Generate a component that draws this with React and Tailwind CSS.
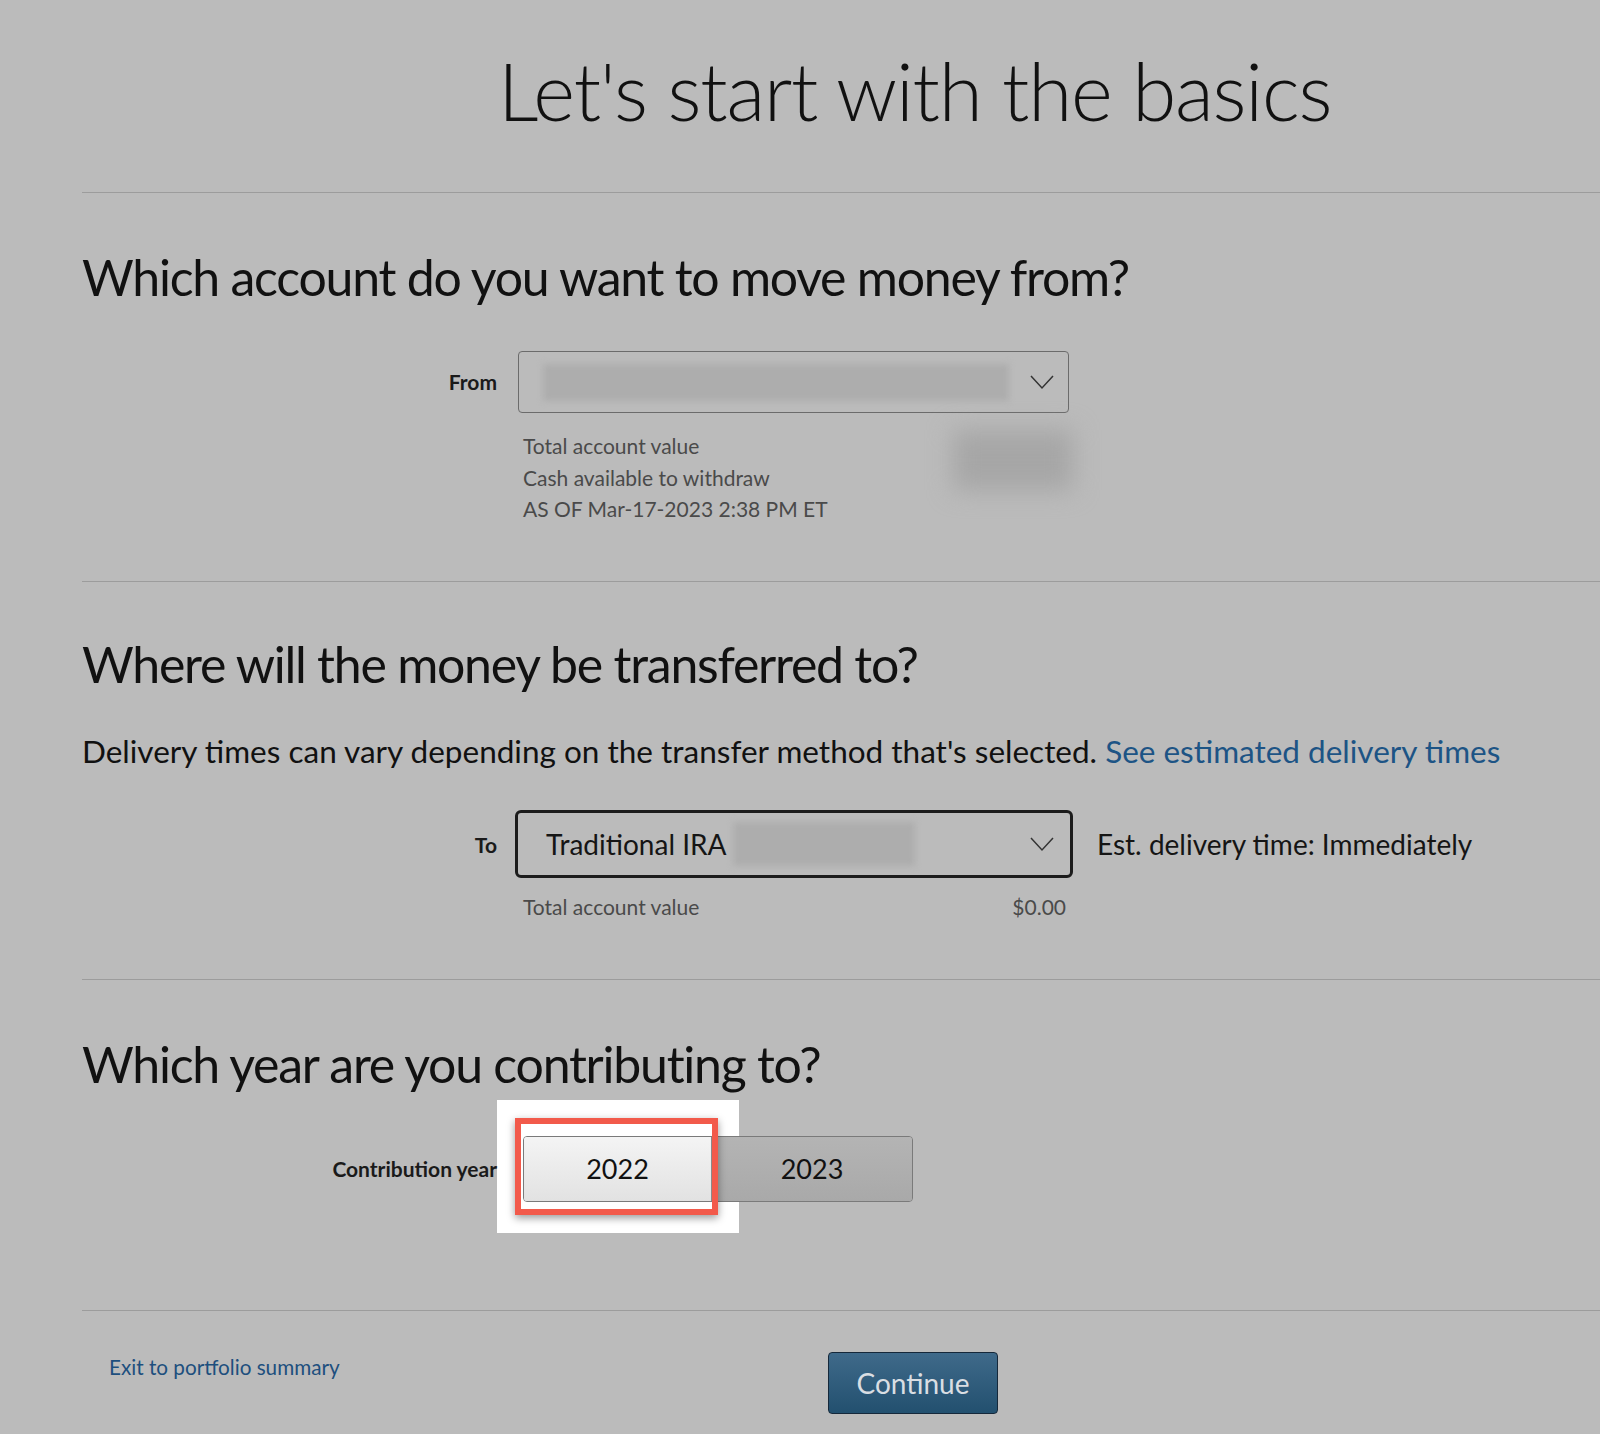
import React from "react";

const Chevron = () => (
  <svg width="24" height="15" viewBox="0 0 24 15" fill="none">
    <polyline points="1,1 12,13 23,1" stroke="#333" strokeWidth="1.5" />
  </svg>
);

const Row = ({ label, children }) => (
  <div className="flex items-center">
    <div className="w-[436px] shrink-0 text-right pr-[21px] text-[21px] font-bold text-[#1a1a1a] whitespace-nowrap">
      {label}
    </div>
    <div className="flex-1">{children}</div>
  </div>
);

export default function App() {
  return (
    <div
      className="min-h-[1434px] bg-[#bbbbbb] pl-[82px] text-[#111]"
      style={{ fontFamily: "Lato, 'Open Sans', sans-serif" }}
    >
      {/* title */}
      <div className="h-[193px] border-b border-[#9c9c9c] pt-[42px] pl-[416px]">
        <h1 className="text-[80px] font-light leading-[1.2] tracking-[-1.2px] whitespace-nowrap">
          Let's start with the basics
        </h1>
      </div>

      {/* from */}
      <section className="border-b border-[#9c9c9c] pt-[54px] pb-[56px]">
        <h2 className="text-[50px] leading-[1.2] tracking-[-1.25px] whitespace-nowrap">
          Which account do you want to move money from?
        </h2>
        <div className="mt-[44px]">
          <Row label="From">
            <div className="w-[551px] h-[62px] border border-[#6b6b6b] rounded-[4px] flex items-center pl-[24px] pr-[14px]">
              <div className="w-[466px] h-[37px] bg-[#adadad] blur-[3px]" />
              <div className="ml-auto">
                <Chevron />
              </div>
            </div>
          </Row>
          <div className="ml-[441px] mt-[17px] relative w-[551px] text-[21px] leading-[31.5px] text-[#4a4a4a]">
            <p>Total account value</p>
            <p>Cash available to withdraw</p>
            <p>AS OF Mar-17-2023 2:38 PM ET</p>
            <div className="absolute left-[430px] top-[0px] w-[120px] h-[60px] bg-[#a6a6a6] blur-[12px]" />
          </div>
        </div>
      </section>

      {/* to */}
      <section className="border-b border-[#9c9c9c] pt-[52px] pb-[56px]">
        <h2 className="text-[50px] leading-[1.2] tracking-[-1.25px] whitespace-nowrap">
          Where will the money be transferred to?
        </h2>
        <p className="mt-[39px] text-[31.5px] leading-[1.2] whitespace-nowrap">
          Delivery times can vary depending on the transfer method that's
          selected.{" "}
          <a className="text-[#1d5485]">See estimated delivery times</a>
        </p>
        <div className="mt-[40px]">
          <Row label="To">
            <div className="flex items-center">
              <div className="-ml-[3px] w-[558px] h-[68px] border-[3px] border-[#1c1c1c] rounded-[6px] flex items-center pl-[28px] pr-[16px]">
                <span className="text-[28px] text-[#151515] whitespace-nowrap">
                  Traditional IRA
                </span>
                <div className="ml-[6px] w-[182px] h-[44px] bg-[#adadad] blur-[3px]" />
                <div className="ml-auto">
                  <Chevron />
                </div>
              </div>
              <span className="ml-[24px] text-[28px] text-[#151515] whitespace-nowrap">
                Est. delivery time: Immediately
              </span>
            </div>
          </Row>
          <div className="ml-[441px] mt-[13px] w-[543px] flex justify-between text-[21px] leading-[31.5px] text-[#4a4a4a]">
            <span>Total account value</span>
            <span>$0.00</span>
          </div>
        </div>
      </section>

      {/* year */}
      <section className="border-b border-[#9c9c9c] pt-[54px] pb-[108px]">
        <h2 className="text-[50px] leading-[1.2] tracking-[-1.25px] whitespace-nowrap">
          Which year are you contributing to?
        </h2>
        <div className="mt-[42px] flex items-center">
          <div className="w-[415px] shrink-0 text-right text-[21px] font-bold text-[#1a1a1a] relative z-10 whitespace-nowrap">
            Contribution year
          </div>
          <div className="ml-[26px] relative">
            <div className="absolute -left-[26px] -top-[36px] w-[242px] h-[133px] bg-white" />
            <div className="relative flex h-[66px] w-[390px] rounded-[4px] border border-[#7a7a7a] overflow-hidden text-[27px] text-[#111]">
              <button className="w-[188px] bg-gradient-to-b from-[#f4f4f4] to-[#e2e2e2] border-r border-[#8a8a8a]">
                2022
              </button>
              <button className="flex-1 bg-gradient-to-b from-[#b4b4b4] to-[#a9a9a9]">
                2023
              </button>
            </div>
            <div className="absolute -left-[8px] -top-[18px] w-[203px] h-[97px] border-[6px] border-[#f25a4b] shadow-[0_3px_8px_rgba(0,0,0,0.4)]" />
          </div>
        </div>
      </section>

      {/* footer */}
      <div className="flex items-start pt-[41px]">
        <div className="w-[746px] shrink-0 pl-[27px] pt-[3px]">
          <a className="text-[20.7px] leading-[25px] text-[#1d4f7e] whitespace-nowrap">
            Exit to portfolio summary
          </a>
        </div>
        <button className="w-[170px] h-[62px] rounded-[4px] border border-[#15283a] bg-gradient-to-b from-[#3f6a8a] to-[#22506f] text-[28px] text-[#d9dee3]">
          Continue
        </button>
      </div>
    </div>
  );
}
